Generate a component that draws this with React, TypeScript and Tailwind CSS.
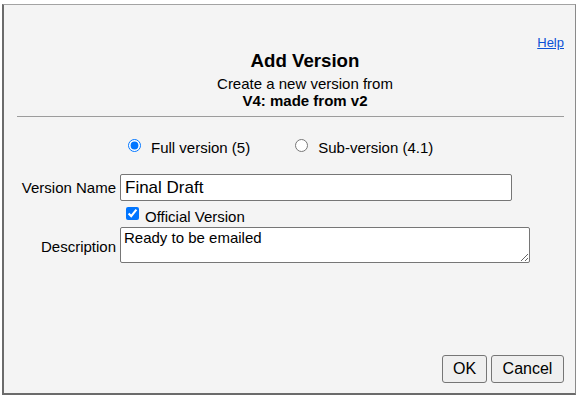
import { type ReactNode } from "react";

// --- small pieces ------------------------------------------------------------
function DialogButton({ children, width }: { children: ReactNode; width: string }) {
  return (
    <button
      type="button"
      className={`${width} flex h-[28px] items-center justify-center rounded-[3px] border border-[#767676] bg-[#efefef] text-[16px] leading-none text-black`}
    >
      {children}
    </button>
  );
}

function RadioOption({ label, checked, className }: { label: string; checked?: boolean; className?: string }) {
  return (
    <label className={`flex items-start ${className ?? ""}`}>
      <input type="radio" name="kind" defaultChecked={checked} className="m-0 mt-[1px] h-[13px] w-[13px]" />
      <span className="ml-[10px] mt-[1px] leading-[17px]">{label}</span>
    </label>
  );
}

export default function App() {
  return (
    <div className="h-[398px] w-[579px] bg-white pl-[2px] pt-[4px] font-['Liberation_Sans',Arial,sans-serif] text-[15px] text-black">
      <div className="flex h-[391px] w-[574px] flex-col border-t border-r border-b-2 border-l-2 border-t-[#a3a3a3] border-r-[#8a8a8a] border-b-[#6b6b6b] border-l-[#6b6b6b] bg-[#f4f4f4] pl-[13px] pr-[11px] pt-[30px] pb-[10px]">
        {/* header */}
        <div className="text-right text-[13px] leading-[15px]">
          <a href="#" className="text-[#0b50d6] underline">
            Help
          </a>
        </div>
        <div className="pl-[29px] text-center">
          <h1 className="text-[18.67px] font-bold leading-[21px]">Add Version</h1>
          <p className="mt-[4px] leading-[17px]">Create a new version from</p>
          <p className="font-bold leading-[17px]">V4: made from v2</p>
        </div>
        <div className="mt-[7px] h-px bg-[#9c9c9c]" />

        {/* version kind */}
        <div className="mt-[21px] flex pl-[111px]">
          <RadioOption label="Full version (5)" checked />
          <RadioOption label="Sub-version (4.1)" className="ml-[45px]" />
        </div>

        {/* fields */}
        <div className="mt-[18px] flex items-center">
          <span className="w-[99px] text-right leading-[17px]">Version Name</span>
          <input
            type="text"
            defaultValue="Final Draft"
            className="ml-[4px] h-[27px] w-[392px] rounded-[2px] border border-[#767676] bg-white px-[4px] text-[17px] leading-[20px] text-black outline-none"
          />
        </div>
        <div className="mt-[6px] flex items-start pl-[109px]">
          <input type="checkbox" defaultChecked className="m-0 h-[13px] w-[13px]" />
          <span className="ml-[6px] mt-[1px] leading-[17px]">Official Version</span>
        </div>
        <div className="mt-[2px] flex items-start">
          <span className="mt-[11px] w-[99px] text-right leading-[17px]">Description</span>
          <textarea
            defaultValue="Ready to be emailed"
            className="ml-[4px] h-[36px] w-[410px] resize rounded-[2px] border border-[#767676] bg-white px-[3px] pt-[1px] text-[15px] leading-[17px] text-black outline-none"
          />
        </div>

        {/* actions */}
        <div className="mt-auto flex justify-end gap-[4px]">
          <DialogButton width="w-[45px]">OK</DialogButton>
          <DialogButton width="w-[73px]">Cancel</DialogButton>
        </div>
      </div>
    </div>
  );
}
